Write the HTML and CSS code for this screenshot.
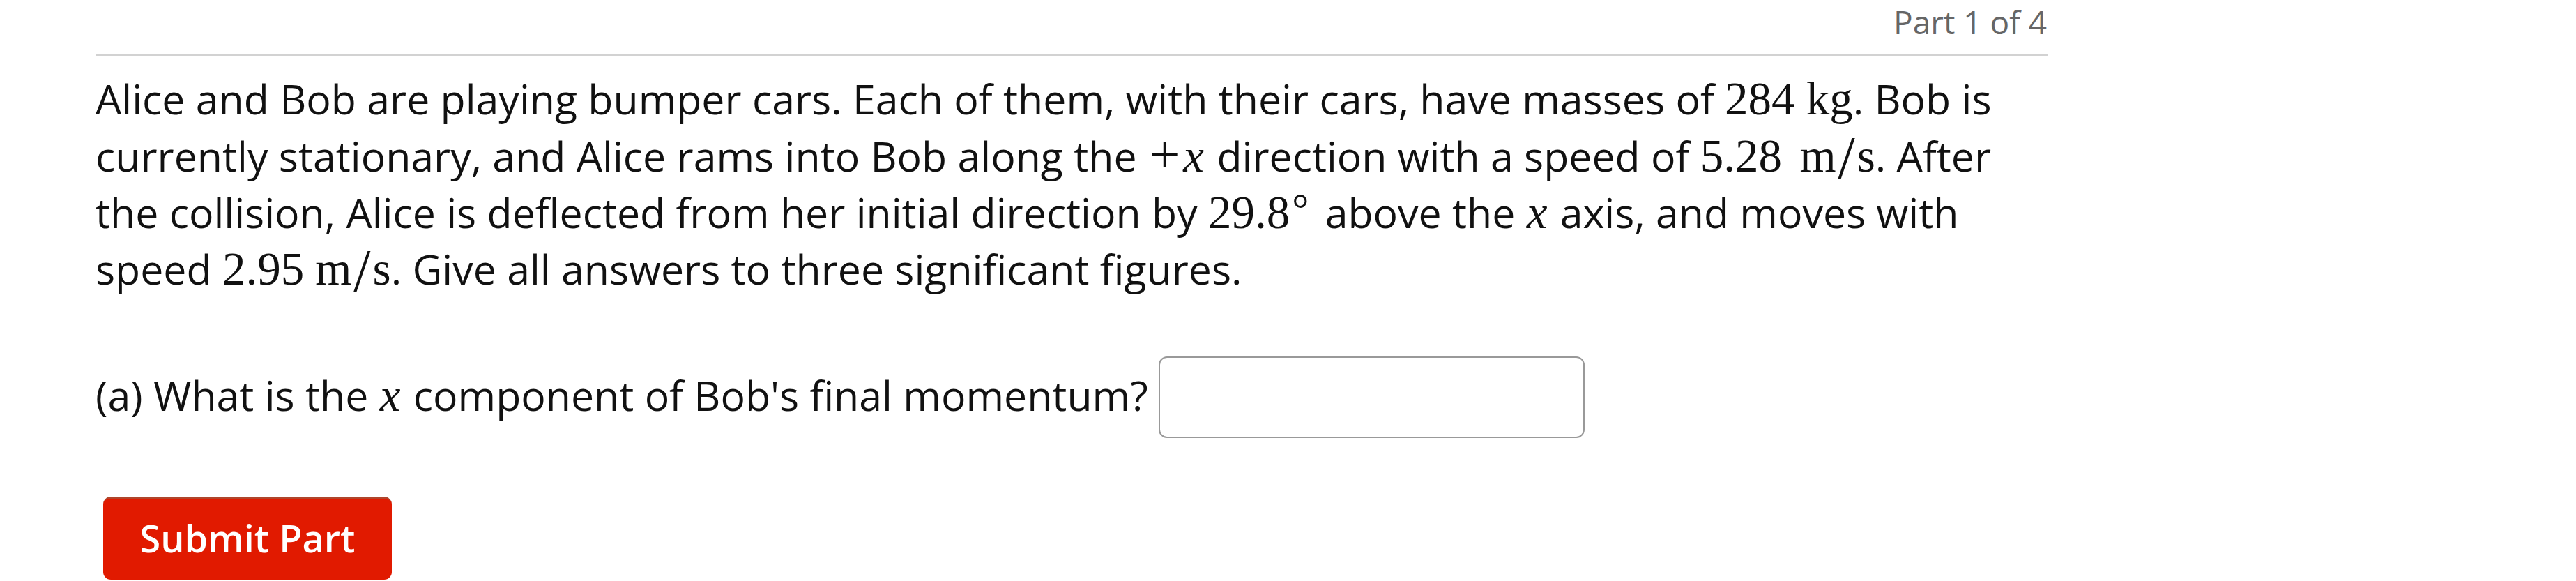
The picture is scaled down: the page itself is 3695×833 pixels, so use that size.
FILE: index.html
```html
<!DOCTYPE html>
<html lang="en">
<head>
<meta charset="utf-8">
<title>Part 1 of 4</title>
<link rel="stylesheet" href="styles.css">
</head>
<body>
<div class="page">
  <div class="header"><span class="part">Part 1 of 4</span></div>
  <p class="problem">Alice and Bob are playing bumper cars. Each of them, with their cars, have masses of <span class="m">284<span class="u">kg</span></span>. Bob is currently stationary, and Alice rams into Bob along the <span class="m"><span class="plus">+</span><i>x</i></span> direction with a speed of <span class="m">5.28<span class="u wide">m<span class="sl">/</span>s</span></span>. After the collision, Alice is deflected from her initial direction by <span class="m">29.8<span class="deg">&#176;</span></span> above the <span class="m"><i>x</i></span> axis, and moves with speed <span class="m">2.95<span class="u">m<span class="sl">/</span>s</span></span>. Give all answers to three significant figures.</p>
  <div class="question">
    <span class="qtext">(a) What is the <span class="m"><i>x</i></span> component of Bob's final momentum?</span>
    <input class="answer" type="text" aria-label="answer">
  </div>
  <button class="submit" type="button">Submit Part</button>
</div>
</body>
</html>
```
FILE: styles.css
```css
html, body {
  margin: 0;
  padding: 0;
  background: #fff;
}
body {
  font-family: "Open Sans", "Noto Sans", sans-serif;
  color: #111;
  overflow: hidden;
}
.page {
  width: 2801px;
  margin-left: 137px;
}
.header {
  display: flex;
  justify-content: flex-end;
  padding-bottom: 15px;
  border-bottom: 4px solid #d2d2d2;
}
.part {
  font-size: 46px;
  line-height: 62px;
  color: #666;
  margin-right: 2px;
}
.problem {
  margin: 20px 0 0 0;
  font-size: 59px;
  line-height: 81px;
}
.m {
  font-family: "Liberation Serif", "Times New Roman", serif;
  font-size: 67px;
  line-height: 1;
}
.m i {
  font-style: italic;
  padding-left: 1px;
  padding-right: 3px;
}
.u {
  margin-left: 0.24em;
}
.u.wide {
  margin-left: 0.38em;
}
.sl {
  display: inline-block;
  font-size: 1.3em;
  line-height: 0.8;
  vertical-align: -0.1em;
  padding: 0 3px;
}
.plus {
  display: inline-block;
  font-size: 1.15em;
  line-height: 1;
  padding: 0 4px 0 3px;
}
.deg {
  display: inline-block;
  font-size: 0.9em;
  line-height: 1;
  vertical-align: 0.12em;
  margin-left: 3px;
  margin-right: 8px;
}
.question {
  display: flex;
  align-items: center;
  gap: 15px;
  margin-top: 85px;
}
.qtext {
  font-size: 59px;
  line-height: 81px;
  margin-bottom: 7px;
}
.answer {
  box-sizing: border-box;
  width: 611px;
  height: 117px;
  border: 2.5px solid #999;
  border-radius: 12px;
  background: #fff;
  margin: 0;
  padding: 0 16px;
  font-size: 50px;
  outline: none;
}
.submit {
  display: block;
  margin: 84px 0 0 11px;
  width: 414px;
  padding: 18px 0 22px;
  border: none;
  border-top: 3px solid #b0452c;
  border-radius: 11px;
  background: #e11a00;
  color: #fff;
  font-family: "Open Sans", "Noto Sans", sans-serif;
  font-weight: 600;
  font-size: 54px;
  line-height: 76px;
  text-align: center;
  cursor: pointer;
}
```
